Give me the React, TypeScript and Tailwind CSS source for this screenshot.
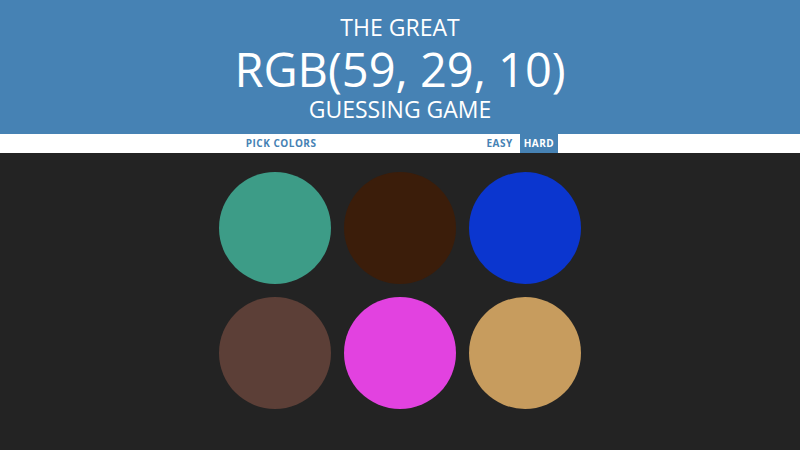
import React from "react";

const swatches = ["#3d9c87", "#3b1d0a", "#0b36cf", "#5c3f37", "#e242e0", "#c79c5e"];

export default function App() {
  return (
    <div
      className="w-[800px] h-[450px] bg-[#232323] overflow-hidden"
      style={{ fontFamily: '"Open Sans", "Noto Sans", sans-serif' }}
    >
      <header className="bg-[#4682b4] text-white text-center uppercase pt-[14px] pb-[14px]">
        <div className="text-[23px] leading-[26px]">The Great</div>
        <div className="text-[47px] leading-[59px]">RGB(59, 29, 10)</div>
        <div className="text-[23px] leading-[21px]">Guessing Game</div>
      </header>

      <nav className="bg-white h-[19px] flex justify-center items-stretch text-[10px] font-bold tracking-[0.5px] uppercase text-[#4682b4]">
        <button className="px-1 leading-[19px] uppercase">Pick Colors</button>
        <span className="w-[162px]"></span>
        <button className="px-1 leading-[19px] uppercase">Easy</button>
        <button className="ml-[3px] px-1 leading-[19px] uppercase bg-[#4682b4] text-white">Hard</button>
      </nav>

      <main className="grid grid-cols-3 gap-[13px] w-fit mx-auto mt-[19px]">
        {swatches.map((c, i) => (
          <div key={i} className="w-[112px] h-[112px] rounded-full" style={{ backgroundColor: c }} />
        ))}
      </main>
    </div>
  );
}
